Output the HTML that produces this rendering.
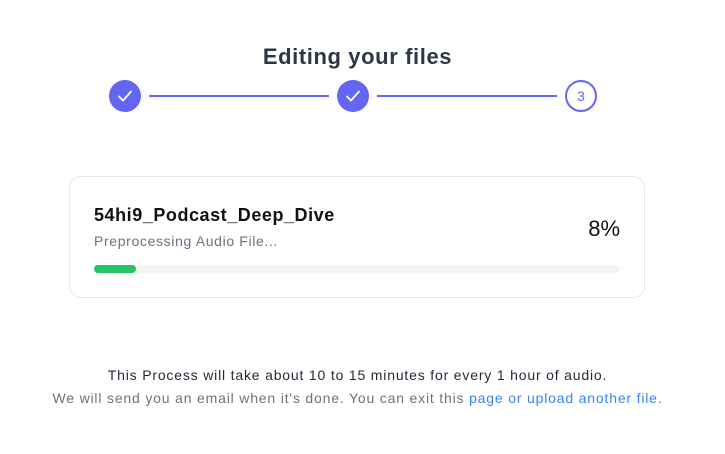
<!DOCTYPE html>
<html><head><style>
body{margin:0;width:725px;height:454px;background:#fff;font-family:"Liberation Sans",sans-serif;position:relative;overflow:hidden}
.a{position:absolute}
.c{position:absolute;width:32px;height:32px;border-radius:50%;top:80px;box-sizing:border-box}
.f{background:#6366f1}
.ln{position:absolute;top:95px;height:2px;background:#6366f1}
</style></head><body>
<div class="a" style="left:0;width:715px;top:44px;text-align:center;font-size:22px;font-weight:bold;color:#2d3748;letter-spacing:0.6px">Editing your files</div>
<div class="c f" style="left:109px"><svg width="32" height="32"><path d="M10 16.5l4 4 8-9" stroke="#fff" stroke-width="1.8" fill="none" stroke-linecap="round" stroke-linejoin="round"/></svg></div>
<div class="ln" style="left:149px;width:180px"></div>
<div class="c f" style="left:337px"><svg width="32" height="32"><path d="M10 16.5l4 4 8-9" stroke="#fff" stroke-width="1.8" fill="none" stroke-linecap="round" stroke-linejoin="round"/></svg></div>
<div class="ln" style="left:377px;width:180px"></div>
<div class="c" style="left:565px;border:2px solid #6366f1;color:#6366f1;font-size:14px;text-align:center;line-height:28px">3</div>
<div class="a" style="left:69px;top:176px;width:576px;height:122px;box-sizing:border-box;border:1px solid #e5e7eb;border-radius:12px"></div>
<div class="a" style="left:94px;top:205px;font-size:18px;font-weight:bold;color:#111;letter-spacing:0.55px">54hi9_Podcast_Deep_Dive</div>
<div class="a" style="left:94px;top:233px;font-size:14px;color:#6b7280;letter-spacing:0.65px">Preprocessing Audio File...</div>
<div class="a" style="right:105px;top:216px;font-size:22px;color:#111">8%</div>
<div class="a" style="left:94px;top:265px;width:526px;height:8px;border-radius:4px;background:#f3f4f6"></div>
<div class="a" style="left:94px;top:265px;width:42px;height:8px;border-radius:4px;background:#22c55e"></div>
<div class="a" style="left:0;width:715px;top:367px;text-align:center;font-size:14px;color:#1f2937;letter-spacing:0.82px">This Process will take about 10 to 15 minutes for every 1 hour of audio.</div>
<div class="a" style="left:0;width:715px;top:390px;text-align:center;font-size:14px;color:#6b7280;letter-spacing:0.82px">We will send you an email when it's done. You can exit this <span style="color:#3b82f6">page or upload another file</span>.</div>
</body></html>
